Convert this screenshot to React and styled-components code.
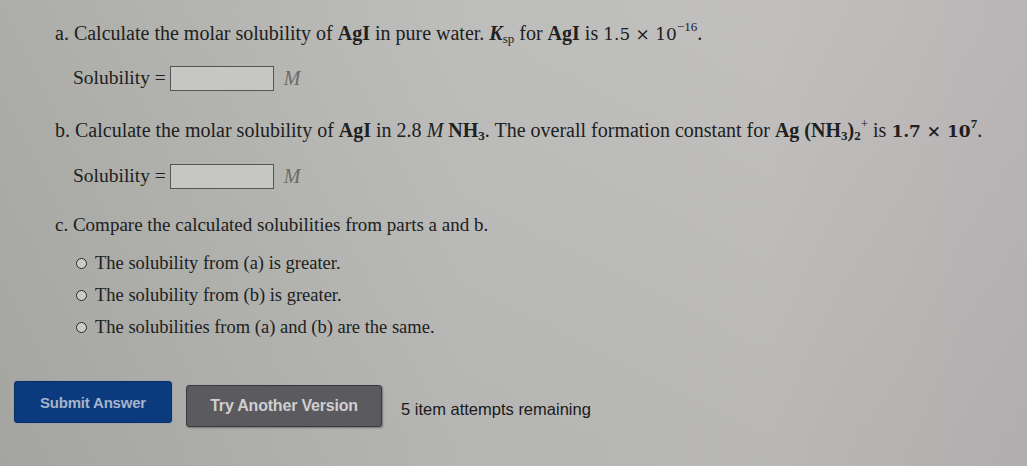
import React from 'react'
import styled, { createGlobalStyle } from 'styled-components'

const GlobalStyle = createGlobalStyle`
  html, body {
    margin: 0;
    padding: 0;
  }
  body {
    width: 1027px;
    height: 466px;
    overflow: hidden;
    background:
      linear-gradient(to bottom, rgba(255,255,255,0.02), rgba(0,0,0,0.04)),
      linear-gradient(to right, #abaca7 0%, #bcbcba 45%, #c0bfbd 75%, #b9b4b5 100%);
  }
`

const Page = styled.div`
  width: 1027px;
  height: 466px;
  padding-top: 21px;
  box-sizing: border-box;
  font-family: 'Liberation Serif', 'Times New Roman', serif;
  color: #202020;
`

const Questions = styled.div`
  padding-left: 55px;
`

const Prompt = styled.div`
  font-size: ${p => p.$size || 20}px;
  line-height: 24px;
  height: 24px;
  white-space: nowrap;
  margin-top: ${p => p.$gap || 0}px;

  b {
    font-weight: bold;
  }
  sub, sup {
    font-size: 13px;
    line-height: 0;
  }
  sub {
    vertical-align: -3px;
  }
  sup {
    vertical-align: 9px;
  }
`

const Num = styled.span`
  font-family: 'DejaVu Serif', 'Liberation Serif', serif;
  font-size: 17px;
  font-weight: ${p => (p.$bold ? 'bold' : 'normal')};
`

const AnswerRow = styled.div`
  display: flex;
  align-items: center;
  gap: 4px;
  padding-left: 18px;
  height: 26px;
  margin-top: ${p => p.$gap}px;
  font-size: 19.5px;
`

const Label = styled.span`
  white-space: nowrap;
`

const AnswerBox = styled.div`
  width: 104px;
  height: 25px;
  border: 1px solid #555;
  background: #c6c6c4;
  box-sizing: border-box;
  margin-right: 6px;
`

const Unit = styled.i`
  color: #6a6a6a;
  font-size: 20px;
`

const Options = styled.div`
  margin-top: 10px;
  padding-left: 21px;
  display: flex;
  flex-direction: column;
`

const Option = styled.label`
  display: flex;
  align-items: center;
  gap: 8px;
  height: 32px;
  font-size: 18.5px;
  white-space: nowrap;
`

const Radio = styled.span`
  width: 9px;
  height: 9px;
  border-radius: 50%;
  border: 1.8px solid #2a2a2a;
  background: #cacac8;
  flex-shrink: 0;
`

const Actions = styled.div`
  display: flex;
  align-items: center;
  padding-left: 14px;
  margin-top: 34px;
  font-family: 'Liberation Sans', Arial, sans-serif;
`

const Button = styled.div`
  height: 42px;
  width: ${p => p.$w}px;
  margin-top: ${p => p.$drop || 0}px;
  margin-right: ${p => p.$space}px;
  box-sizing: border-box;
  display: flex;
  align-items: center;
  justify-content: center;
  border-radius: 3px;
  font-weight: bold;
  font-size: ${p => (p.$primary ? 15 : 16)}px;
  letter-spacing: -0.2px;
  background: ${p => (p.$primary ? '#0c3a7e' : '#5b5a5f')};
  color: ${p => (p.$primary ? '#a6b4c9' : '#cfcfd0')};
  border: 1px solid ${p => (p.$primary ? '#0a2f66' : '#3a393d')};
  box-shadow: ${p => (p.$primary ? '0 0 2px rgba(80,120,200,0.35)' : '1px 1px 2px rgba(0,0,0,0.35)')};
`

const Remaining = styled.span`
  font-size: 16.5px;
  color: #1a1a1a;
  margin-top: 15px;
`

export default function App() {
  return (
    <>
      <GlobalStyle />
      <Page>
        <Questions>
          <Prompt>
            a. Calculate the molar solubility of <b>AgI</b> in pure water.{' '}
            <b><i>K</i></b><sub>sp</sub> for <b>AgI</b> is <Num>1.5 × 10</Num>
            <sup>−16</sup>.
          </Prompt>
          <AnswerRow $gap={20}>
            <Label>Solubility =</Label>
            <AnswerBox />
            <Unit>M</Unit>
          </AnswerRow>

          <Prompt $gap={27}>
            b. Calculate the molar solubility of <b>AgI</b> in 2.8 <i>M</i>{' '}
            <b>NH<sub>3</sub></b>. The overall formation constant for{' '}
            <b>Ag (NH<sub>3</sub>)<sub>2</sub></b>
            <sup>+</sup> is <Num $bold>1.7 × 10</Num>
            <sup><b>7</b></sup>.
          </Prompt>
          <AnswerRow $gap={21}>
            <Label>Solubility =</Label>
            <AnswerBox />
            <Unit>M</Unit>
          </AnswerRow>

          <Prompt $gap={24} $size={19}>
            c. Compare the calculated solubilities from parts a and b.
          </Prompt>
          <Options>
            <Option>
              <Radio />
              The solubility from (a) is greater.
            </Option>
            <Option>
              <Radio />
              The solubility from (b) is greater.
            </Option>
            <Option>
              <Radio />
              The solubilities from (a) and (b) are the same.
            </Option>
          </Options>
        </Questions>

        <Actions>
          <Button $primary $w={158} $space={14}>Submit Answer</Button>
          <Button $w={196} $space={19} $drop={8}>Try Another Version</Button>
          <Remaining>5 item attempts remaining</Remaining>
        </Actions>
      </Page>
    </>
  )
}
